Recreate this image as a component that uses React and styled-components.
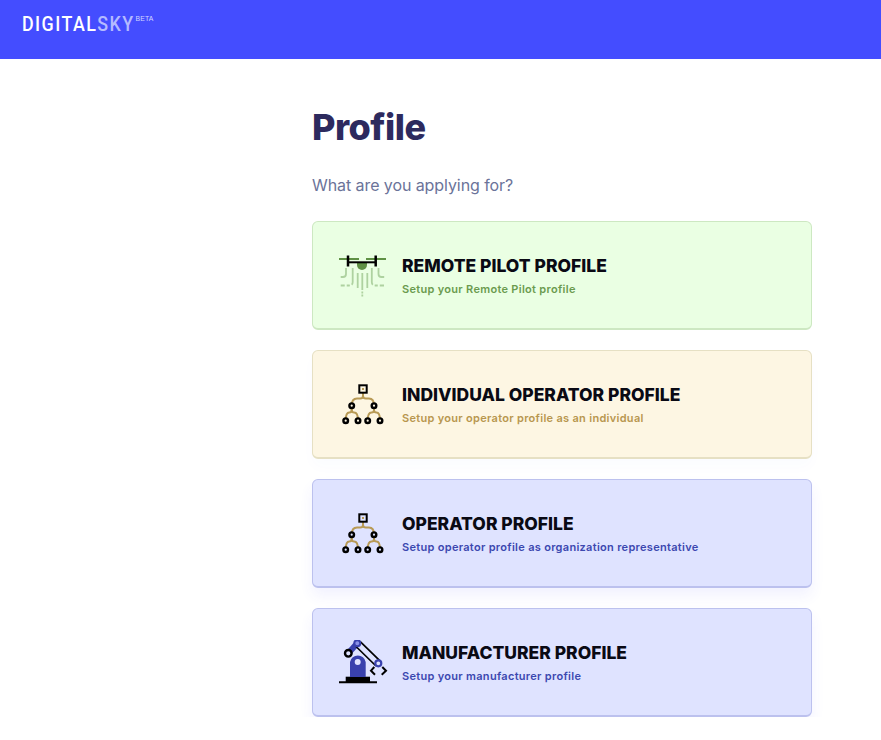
import React from 'react'
import styled, { createGlobalStyle } from 'styled-components'

const Global = createGlobalStyle`
  html, body { margin: 0; padding: 0; background: #fff; }
  body { font-family: Inter, "Liberation Sans", sans-serif; }
`

const Header = styled.header`
  height: 59px;
  background: #444dff;
  padding: 13px 0 0 22px;
  box-sizing: border-box;
  display: flex;
  align-items: flex-start;
`

const Logo = styled.div`
  font-family: Roboto, sans-serif;
  font-size: 21px;
  font-weight: 500;
  line-height: 22px;
  letter-spacing: 1.7px;
  color: #fff;
  display: flex;
  align-items: flex-start;
  transform: scaleX(0.85);
  transform-origin: left top;
`

const LogoSky = styled.span`
  color: #b4baff;
`

const Beta = styled.span`
  font-family: "Liberation Sans", sans-serif;
  font-size: 8px;
  font-weight: 400;
  line-height: 8px;
  letter-spacing: 0.2px;
  color: #d3d6ff;
  margin: 2px 0 0 1px;
`

const Main = styled.main`
  width: 500px;
  margin-left: 312px;
`

const Title = styled.h1`
  margin: 0;
  padding-top: 45px;
  font-size: 36px;
  line-height: 46px;
  font-weight: 800;
  letter-spacing: -0.5px;
  color: #2d2a5e;
`

const Question = styled.p`
  margin: 0;
  padding-top: 23px;
  font-size: 16px;
  line-height: 24px;
  letter-spacing: -0.08px;
  color: #6b7399;
`

const Cards = styled.div`
  margin-top: 24px;
  display: flex;
  flex-direction: column;
  gap: 20px;
`

const Card = styled.div`
  height: 109px;
  box-sizing: border-box;
  display: flex;
  align-items: center;
  gap: 14px;
  padding-left: 25px;
  border: 1px solid ${p => p.$border};
  border-bottom-width: 2px;
  border-radius: 6px;
  background: ${p => p.$bg};
  box-shadow: 0 8px 14px rgba(68, 77, 255, ${p => p.$shadow});
`

const IconBox = styled.svg`
  width: 50px;
  height: 44px;
  flex: none;
  display: block;
`

const CardText = styled.div`
  display: flex;
  flex-direction: column;
  padding-top: 3px;
`

const CardTitle = styled.div`
  font-size: 17.5px;
  line-height: 24px;
  font-weight: 800;
  color: #0a0a14;
`

const CardSub = styled.div`
  font-size: 11px;
  line-height: 22px;
  font-weight: 600;
  letter-spacing: 0.3px;
  color: ${p => p.$color};
`

const DroneIcon = () => (
  <IconBox viewBox="0 0 50 44">
    <g fill="none" stroke="#aed2a0" strokeWidth="1.8">
      <path d="M8 15v6q0 3-3 3H2.700" />
      <path d="M14.700 15v14q0 3.500-3.500 3.500H2.700" strokeDasharray="17 2 3 2 8" />
      <path d="M19.700 20v15" />
      <path d="M24.300 20v17M24.300 38.500v2M24.300 41.500v2" />
      <path d="M29.300 20v15" />
      <path d="M33.800 15v14q0 3.500 3.500 3.500H46" strokeDasharray="17 2 3 2 8" />
      <path d="M40.500 15v6q0 3 3 3h2.700" />
    </g>
    <path d="M19 10h10v2a5 5 0 0 1-10 0z" fill="#5f9145" />
    <path d="M1 6h20M28 6h20" stroke="#5f9145" strokeWidth="2" />
    <path d="M10 2.500v11M37.700 2.500v11" stroke="#000" strokeWidth="2.500" />
    <path d="M10 9.300h27.700" stroke="#000" strokeWidth="2" />
  </IconBox>
)

const TreeIcon = ({ fill }) => {
  const nodes = [[13.7, 23.7], [36, 23.7], [7.7, 38.7], [20, 38.7], [29.7, 38.7], [42, 38.7]]
  return (
    <IconBox viewBox="0 0 50 44">
      <g fill="none" stroke="#b89a55" strokeWidth="2">
        <path d="M25 11v3q0 2.500-3 2.500h-3q-5.300 0-5.300 7.200" />
        <path d="M25 11v3q0 2.500 3 2.500h3q5 0 5 7.200" />
        <path d="M13.700 27v1q0 2.500-2.500 2.500q-3.500 0-3.500 8.200" />
        <path d="M13.700 27v1q0 2.500 2.500 2.500q3.800 0 3.800 8.200" />
        <path d="M36 27v1q0 2.500-2.500 2.500q-3.800 0-3.800 8.200" />
        <path d="M36 27v1q0 2.500 2.500 2.500q3.500 0 3.500 8.200" />
      </g>
      <rect x="20.300" y="2.300" width="9.400" height="9.400" fill="#000" />
      <rect x="22.300" y="4.300" width="5.400" height="5.400" fill={fill} />
      <rect x="24" y="6" width="2" height="2" fill="#b89a55" />
      {nodes.map(([x, y]) => (
        <circle key={x + '-' + y} cx={x} cy={y} r="2.300" fill={fill} stroke="#000" strokeWidth="2.400" />
      ))}
    </IconBox>
  )
}

const RobotIcon = () => (
  <IconBox viewBox="0 0 50 44">
    <path d="M1 42.300h38" stroke="#000" strokeWidth="2" />
    <path d="M7.700 42v-5.300h24.300V42z" fill="#000" />
    <path d="M12 37V22a8 8 0 0 1 15.700 0v15z" fill="#3941ad" />
    <circle cx="19.700" cy="22" r="3" fill="#dfe3ff" />
    <path d="M10.300 13.300l9-10" stroke="#3941ad" strokeWidth="6" />
    <path d="M22 1.300l20.500 20M17.500 6l20.500 20" stroke="#000" strokeWidth="1.700" />
    <path d="M36.300 27l-3.300 3.700 4 4M44.300 27l3.700 3.700-4.300 4" fill="none" stroke="#000" strokeWidth="2" />
    <circle cx="10.300" cy="13.300" r="3.300" fill="#dfe3ff" stroke="#000" strokeWidth="2.400" />
    <circle cx="19.300" cy="3.300" r="3" fill="#8a90e8" stroke="#3941ad" strokeWidth="2" />
    <circle cx="40.300" cy="23.300" r="3" fill="#dfe3ff" stroke="#3941ad" strokeWidth="2.200" />
  </IconBox>
)

const profiles = [
  {
    title: 'REMOTE PILOT PROFILE',
    sub: 'Setup your Remote Pilot profile',
    bg: '#eaffe3', border: '#cde8c2', color: '#6b9b4f', shadow: 0,
    icon: <DroneIcon />,
  },
  {
    title: 'INDIVIDUAL OPERATOR PROFILE',
    sub: 'Setup your operator profile as an individual',
    bg: '#fdf6e3', border: '#e6e0c4', color: '#b8964f', shadow: 0.02,
    icon: <TreeIcon fill="#fdf6e3" />,
  },
  {
    title: 'OPERATOR PROFILE',
    sub: 'Setup operator profile as organization representative',
    bg: '#dfe3ff', border: '#bcc1ee', color: '#3c48b0', shadow: 0.07,
    icon: <TreeIcon fill="#dfe3ff" />,
  },
  {
    title: 'MANUFACTURER PROFILE',
    sub: 'Setup your manufacturer profile',
    bg: '#dfe3ff', border: '#bcc1ee', color: '#3c48b0', shadow: 0.07,
    icon: <RobotIcon />,
  },
]

const App = () => (
  <>
    <Global />
    <Header>
      <Logo>
        DIGITAL<LogoSky>SKY</LogoSky>
        <Beta>BETA</Beta>
      </Logo>
    </Header>
    <Main>
      <Title>Profile</Title>
      <Question>What are you applying for?</Question>
      <Cards>
        {profiles.map(p => (
          <Card key={p.title} $bg={p.bg} $border={p.border} $shadow={p.shadow}>
            {p.icon}
            <CardText>
              <CardTitle>{p.title}</CardTitle>
              <CardSub $color={p.color}>{p.sub}</CardSub>
            </CardText>
          </Card>
        ))}
      </Cards>
    </Main>
  </>
)

export default App
